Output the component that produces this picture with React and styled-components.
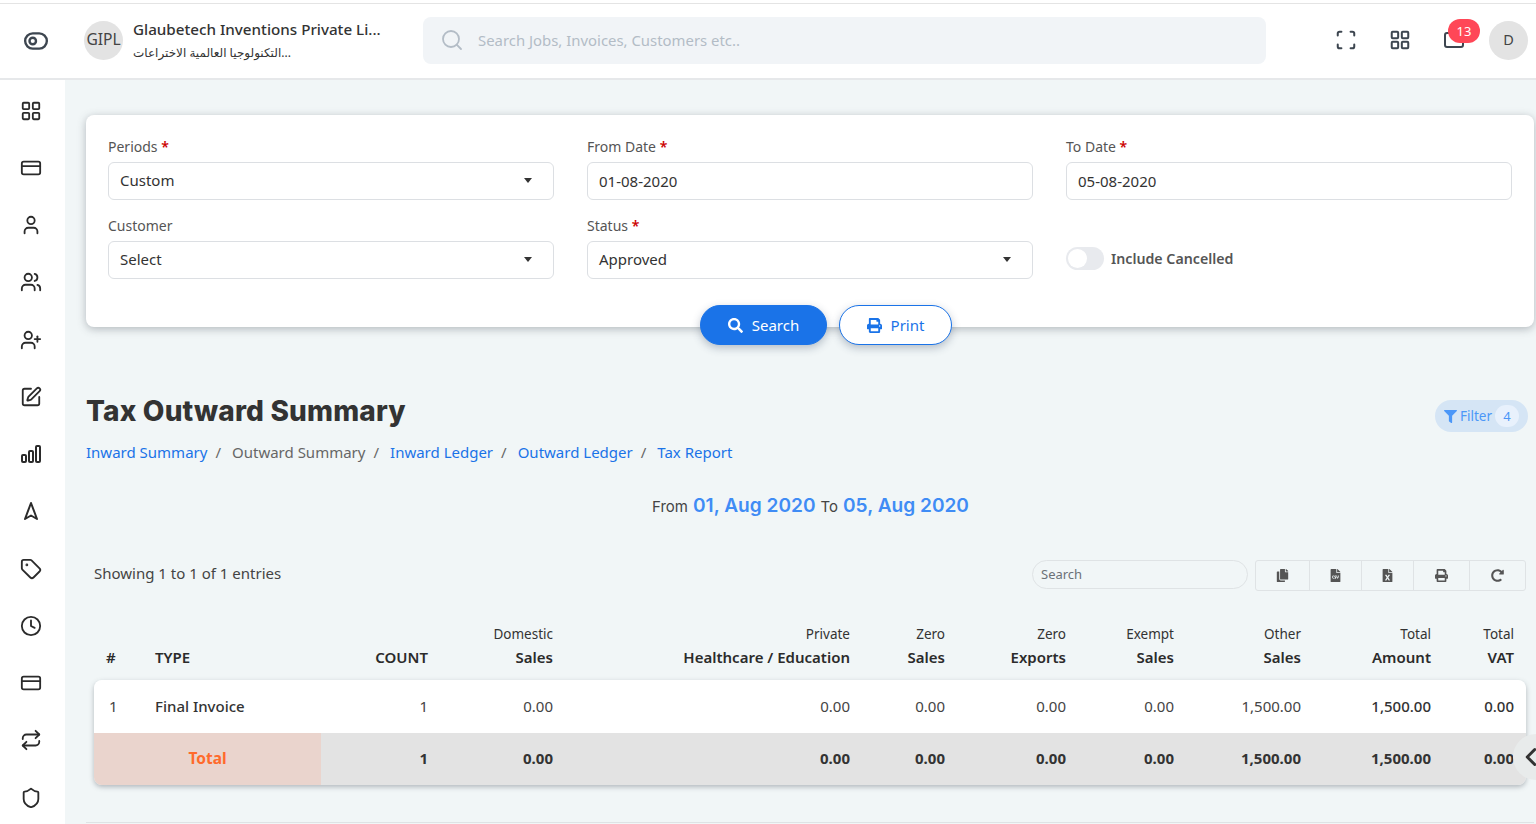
import React from 'react'
import styled, { createGlobalStyle } from 'styled-components'
import { Scan, LayoutGrid, CreditCard, User, Users, UserPlus, SquarePen, Tag, Clock, Repeat, Shield, ToggleLeft, Search as SearchIcon, ChevronLeft } from 'lucide-react'
import { FaSearch, FaPrint, FaFilter, FaCopy, FaFileCsv, FaFileExcel, FaRedoAlt } from 'react-icons/fa'

const BarsIcon = () => (
  <svg width="22" height="22" viewBox="0 0 22 22" fill="none" stroke="currentColor" strokeWidth="2">
    <rect x="2" y="12" width="4" height="7" rx="1" />
    <rect x="9" y="8" width="4" height="11" rx="1" />
    <rect x="16" y="3" width="4" height="16" rx="1" />
  </svg>
)

const NavIcon = () => (
  <svg width="22" height="22" viewBox="0 0 22 22" fill="none" stroke="currentColor" strokeWidth="2" strokeLinejoin="round">
    <path d="M11 3 L17 19 L11 15.5 L5 19 Z" />
  </svg>
)

const InboxIcon = () => (
  <svg width="22" height="22" viewBox="0 0 22 22" fill="none" stroke="#3d4650" strokeWidth="2" strokeLinejoin="round">
    <rect x="2" y="4" width="18" height="14" rx="2" />
  </svg>
)

const sideIcons = [
  <LayoutGrid size={22} />, <CreditCard size={22} />, <User size={22} />, <Users size={22} />,
  <UserPlus size={22} />, <SquarePen size={22} />, <BarsIcon />, <NavIcon />, <Tag size={22} />,
  <Clock size={22} />, <CreditCard size={22} />, <Repeat size={22} />, <Shield size={22} />,
]

const crumbs = [
  { name: 'Inward Summary', link: true },
  { name: 'Outward Summary', link: false },
  { name: 'Inward Ledger', link: true },
  { name: 'Outward Ledger', link: true },
  { name: 'Tax Report', link: true },
]

const headers = [
  ['Domestic', 'Sales'],
  ['Private', 'Healthcare / Education'],
  ['Zero', 'Sales'],
  ['Zero', 'Exports'],
  ['Exempt', 'Sales'],
  ['Other', 'Sales'],
  ['Total', 'Amount'],
  ['Total', 'VAT'],
]

const values = ['0.00', '0.00', '0.00', '0.00', '0.00', '1,500.00']

const App = () => {
  return (
    <Page>
      <GlobalStyle />
      <TopBar>
        <MenuCell><ToggleLeft size={26} strokeWidth={2.2} /></MenuCell>
        <Brand>
          <Avatar $big>GIPL</Avatar>
          <BrandText>
            <h1>Glaubetech Inventions Private Li...</h1>
            <p>التكنولوجيا العالمية الاختراعات...</p>
          </BrandText>
        </Brand>
        <TopSearch>
          <SearchIcon size={24} strokeWidth={1.8} />
          <span>Search Jobs, Invoices, Customers etc..</span>
        </TopSearch>
        <TopIcons>
          <TopIcon><Scan size={22} strokeWidth={2.2} /></TopIcon>
          <TopIcon><LayoutGrid size={22} strokeWidth={2.2} /></TopIcon>
          <TopIcon><InboxIcon /><Badge>13</Badge></TopIcon>
        </TopIcons>
        <Avatar>D</Avatar>
      </TopBar>
      <Body>
        <SideBar>
          {sideIcons.map((icon, i) => <SideItem key={i}>{icon}</SideItem>)}
        </SideBar>
        <Main>
          <FilterCard>
            <Field>
              <Label>Periods <b>*</b></Label>
              <Select $caret>Custom<Caret /></Select>
            </Field>
            <Field>
              <Label>From Date <b>*</b></Label>
              <Select>01-08-2020</Select>
            </Field>
            <Field>
              <Label>To Date <b>*</b></Label>
              <Select>05-08-2020</Select>
            </Field>
            <Field>
              <Label>Customer</Label>
              <Select $caret>Select<Caret /></Select>
            </Field>
            <Field>
              <Label>Status <b>*</b></Label>
              <Select $caret>Approved<Caret /></Select>
            </Field>
            <ToggleField>
              <Toggle><i /></Toggle>
              <span>Include Cancelled</span>
            </ToggleField>
          </FilterCard>
          <Actions>
            <PillButton $primary><FaSearch />Search</PillButton>
            <PillButton><FaPrint />Print</PillButton>
          </Actions>

          <TitleRow>
            <Title>Tax Outward Summary</Title>
            <FilterPill><FaFilter />Filter<em>4</em></FilterPill>
          </TitleRow>
          <Crumbs>
            {crumbs.map((c, i) => (
              <React.Fragment key={c.name}>
                <Crumb $link={c.link}>{c.name}</Crumb>
                {i < crumbs.length - 1 && <Slash>/</Slash>}
              </React.Fragment>
            ))}
          </Crumbs>
          <DateLine>From <strong>01, Aug 2020</strong> To <strong>05, Aug 2020</strong></DateLine>

          <Tools>
            <Showing>Showing 1 to 1 of 1 entries</Showing>
            <TableSearch>Search</TableSearch>
            <ToolGroup>
              <ToolBtn $w={54}><FaCopy /></ToolBtn>
              <ToolBtn $w={52}><FaFileCsv /></ToolBtn>
              <ToolBtn $w={52}><FaFileExcel /></ToolBtn>
              <ToolBtn $w={56}><FaPrint /></ToolBtn>
              <ToolBtn $w={55}><FaRedoAlt /></ToolBtn>
            </ToolGroup>
          </Tools>

          <Table>
            <HeadRow>
              <HeadCell $left><strong>#</strong></HeadCell>
              <HeadCell $left><strong>TYPE</strong></HeadCell>
              <HeadCell><strong>COUNT</strong></HeadCell>
              {headers.map((h, i) => (
                <HeadCell key={i}><span>{h[0]}</span><strong>{h[1]}</strong></HeadCell>
              ))}
            </HeadRow>
            <TableBody>
              <DataRow>
                <Cell $left $indent>1</Cell>
                <Cell $left $medium>Final Invoice</Cell>
                <Cell>1</Cell>
                {values.map((v, i) => <Cell key={i}>{v}</Cell>)}
                <Cell $medium>1,500.00</Cell>
                <Cell $medium>0.00</Cell>
              </DataRow>
              <TotalRow>
                <TotalLabel>Total</TotalLabel>
                <Cell $bold>1</Cell>
                {values.map((v, i) => <Cell key={i} $bold>{v}</Cell>)}
                <Cell $bold>1,500.00</Cell>
                <Cell $bold>0.00</Cell>
              </TotalRow>
            </TableBody>
            <Collapse><ChevronLeft size={30} strokeWidth={2.4} /></Collapse>
          </Table>
          <Footer />
        </Main>
      </Body>
    </Page>
  )
}

const GlobalStyle = createGlobalStyle`
body{
  margin: 0;
  font-family: "Noto Sans", "DejaVu Sans", sans-serif;
  color: #333;
}
*{
  box-sizing: border-box;
}
`

const Page = styled.div`
height: 824px;
overflow: hidden;
background: #fff;
padding-top: 3px;
`

const TopBar = styled.header`
height: 77px;
display: flex;
align-items: center;
border-top: 1px solid #e4e4e4;
border-bottom: 2px solid #e6e8ea;
padding: 0 8px 2px 0;
`

const MenuCell = styled.div`
width: 73px;
padding: 2px 0 0 23px;
display: flex;
color: #3d4650;
`

const Brand = styled.div`
width: 350px;
margin-left: 11px;
margin-right: -11px;
display: flex;
align-items: center;
gap: 10px;
`

const Avatar = styled.div`
width: 39px;
height: 39px;
padding-bottom: 2px;
border-radius: 50%;
background: #e3e3e3;
color: #444;
font-size: ${p => p.$big ? '15.6px' : '14.5px'};
display: flex;
align-items: center;
justify-content: center;
flex-shrink: 0;
white-space: nowrap;
`

const BrandText = styled.div`
h1{
  margin: 0;
  font-size: 15.2px;
  line-height: 20px;
  font-weight: 500;
  color: #333;
}
p{
  margin: 5px 0 0;
  font-size: 12px;
  line-height: 18px;
  color: #333;
}
`

const TopSearch = styled.div`
width: 843px;
height: 47px;
background: #f1f4f7;
border-radius: 8px;
display: flex;
align-items: center;
padding-left: 17px;
gap: 14px;
color: #b3bcc6;
font-size: 14.9px;
`

const TopIcons = styled.div`
flex: 1;
display: flex;
justify-content: flex-end;
gap: 32px;
padding-right: 24px;
color: #3d4650;
`

const TopIcon = styled.div`
position: relative;
width: 22px;
height: 22px;
`

const Badge = styled.span`
position: absolute;
left: 5px;
top: -10px;
width: 32px;
height: 24px;
border-radius: 12px;
background: #ff4757;
color: #fff;
font-size: 13px;
display: flex;
align-items: center;
justify-content: center;
`

const Body = styled.div`
display: flex;
height: 744px;
`

const SideBar = styled.nav`
width: 65px;
flex-shrink: 0;
padding: 2px 3px 0 0;
background: #fff;
`

const SideItem = styled.div`
height: 57.25px;
display: flex;
align-items: center;
justify-content: center;
color: #2b2b2b;
`

const Main = styled.main`
flex: 1;
min-width: 0;
background: #f1f6f7;
padding: 35px 2px 0 21px;
`

const FilterCard = styled.section`
height: 212px;
background: #fff;
border-radius: 8px;
box-shadow: 0 2px 8px rgba(60, 70, 80, .35);
padding: 22px 22px 0;
display: grid;
grid-template-columns: repeat(3, 1fr);
grid-auto-rows: 79px;
column-gap: 33px;
`

const Field = styled.div`
display: flex;
flex-direction: column;
`

const Label = styled.label`
font-size: 14px;
line-height: 20px;
color: #555;
margin-bottom: 5px;
b{
  color: #c00;
  font-weight: 600;
}
`

const Select = styled.div`
height: 38px;
border: 1px solid #dcdfe3;
border-radius: 6px;
padding: 0 11px ${p => p.$caret ? '2px' : '0'};
display: flex;
align-items: center;
justify-content: space-between;
font-size: 15px;
color: #333;
`

const Caret = styled.i`
width: 0;
height: 0;
margin-right: 10px;
border-left: 4.5px solid transparent;
border-right: 4.5px solid transparent;
border-top: 5px solid #333;
`

const ToggleField = styled.div`
display: flex;
align-items: center;
gap: 7px;
padding-top: 6px;
font-size: 14.2px;
font-weight: 600;
color: #555;
`

const Toggle = styled.div`
width: 38px;
height: 23px;
padding: 2px;
border-radius: 12px;
background: #e8eaee;
i{
  display: block;
  width: 19px;
  height: 19px;
  border-radius: 50%;
  background: #fff;
}
`

const Actions = styled.div`
display: flex;
justify-content: center;
gap: 12px;
margin-top: -22px;
padding-left: 32px;
position: relative;
`

const PillButton = styled.button`
height: 40px;
width: ${p => p.$primary ? '127px' : '113px'};
border-radius: 20px;
border: 1px solid #1a73e8;
background: ${p => p.$primary ? '#1a73e8' : '#fff'};
color: ${p => p.$primary ? '#fff' : '#1a73e8'};
box-shadow: 0 3px 8px rgba(40, 60, 90, .3);
font-family: inherit;
font-size: 15px;
display: flex;
align-items: center;
justify-content: center;
gap: 9px;
svg{
  font-size: 15px;
}
`

const TitleRow = styled.div`
display: flex;
justify-content: space-between;
align-items: center;
margin-top: 55px;
height: 32px;
`

const Title = styled.h2`
margin: 0 0 10px;
font-family: Inter, "Noto Sans", sans-serif;
font-size: 28px;
font-weight: 800;
letter-spacing: .17px;
color: #333;
`

const FilterPill = styled.div`
width: 93px;
height: 32px;
margin-right: 6px;
border-radius: 16px;
background: #d5e5f5;
color: #4b97f8;
font-size: 13.5px;
display: flex;
align-items: center;
padding-left: 9px;
gap: 3px;
svg{
  font-size: 13px;
}
em{
  font-style: normal;
  font-size: 13px;
  width: 24px;
  height: 22px;
  margin-left: 0;
  border-radius: 11px;
  background: #e8f1fc;
  display: flex;
  align-items: center;
  justify-content: center;
}
`

const Crumbs = styled.div`
margin-top: 8px;
height: 24px;
display: flex;
align-items: center;
font-size: 15px;
`

const Crumb = styled.span`
color: ${p => p.$link ? '#1a73e8' : '#666'};
`

const Slash = styled.span`
color: #666;
margin: 0 11px 0 8px;
`

const DateLine = styled.div`
margin-top: 29px;
height: 28px;
display: flex;
align-items: baseline;
justify-content: center;
gap: 5px;
padding-left: 1px;
font-family: Inter, "Noto Sans", sans-serif;
font-size: 15px;
color: #444;
strong{
  font-size: 19.1px;
  font-weight: 600;
  color: #3f8cf5;
}
`

const Tools = styled.div`
margin-top: 38px;
margin-left: 8px;
margin-right: 8px;
display: flex;
align-items: flex-start;
`

const Showing = styled.div`
flex: 1;
font-size: 15px;
line-height: 29px;
color: #444;
`

const TableSearch = styled.div`
width: 216px;
height: 29px;
margin-top: 1px;
border: 1px solid #dfe3e5;
border-radius: 15px;
padding-left: 8px;
font-size: 13px;
line-height: 27px;
color: #6b7178;
`

const ToolGroup = styled.div`
margin: 1px 0 0 7px;
display: flex;
height: 31px;
border: 1px solid #dfe3e5;
border-radius: 3px;
`

const ToolBtn = styled.div`
width: ${p => p.$w}px;
display: flex;
align-items: center;
justify-content: center;
font-size: 13px;
color: #555;
border-right: 1px solid #dfe3e5;
&:last-child{
  border-right: 0;
}
`

const Table = styled.div`
margin: 0 8px;
position: relative;
`

const cols = '49px 178px 119px 125px 297px 95px 121px 108px 127px 130px 83px'

const HeadRow = styled.div`
display: grid;
grid-template-columns: ${cols};
height: 89px;
align-items: end;
`

const HeadCell = styled.div`
padding: 0 12px 12px;
display: flex;
flex-direction: column;
gap: 2px;
text-align: ${p => p.$left ? 'left' : 'right'};
span{
  font-size: 13.5px;
  line-height: 21px;
  color: #333;
}
strong{
  font-size: 15px;
  line-height: 21px;
  font-weight: 600;
  color: #2b2b2b;
}
`

const TableBody = styled.div`
border-radius: 8px;
box-shadow: 0 2px 5px rgba(60, 70, 80, .35);
overflow: hidden;
`

const DataRow = styled.div`
display: grid;
grid-template-columns: ${cols};
height: 53px;
align-items: center;
background: #fff;
`

const TotalRow = styled.div`
display: grid;
grid-template-columns: ${cols};
height: 52px;
align-items: center;
background: #e3e3e3;
`

const Cell = styled.div`
padding: 0 12px 2px ${p => p.$indent ? '15px' : '12px'};
font-size: 15px;
text-align: ${p => p.$left ? 'left' : 'right'};
font-weight: ${p => p.$bold ? 700 : p.$medium ? 500 : 400};
color: ${p => p.$bold || p.$medium ? '#333' : '#444'};
`

const TotalLabel = styled.div`
grid-column: span 2;
align-self: stretch;
padding-bottom: 2px;
background: #ead4cd;
color: #ff6a2b;
font-size: 15.5px;
font-weight: 700;
display: flex;
align-items: center;
justify-content: center;
`

const Collapse = styled.div`
position: absolute;
right: -10px;
bottom: 5px;
width: 23px;
height: 46px;
overflow: hidden;
background: #e8ebeb;
border-radius: 23px 0 0 23px;
color: #333;
display: flex;
align-items: center;
svg{
  flex-shrink: 0;
  margin-left: 3px;
}
`

const Footer = styled.div`
margin-top: 37px;
border-top: 1px solid #dfe3e5;
`

export default App
